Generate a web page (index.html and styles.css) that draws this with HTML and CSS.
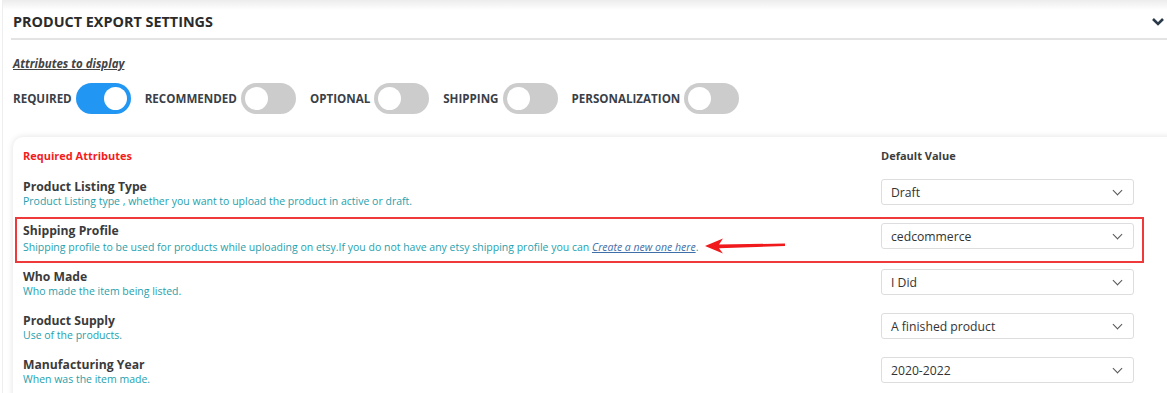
FILE: index.html
```html
<!DOCTYPE html>
<html lang="en">
<head>
    <meta charset="UTF-8">
    <meta name="viewport" content="width=device-width, initial-scale=1.0">
    <title>Product Export Settings</title>
    <link rel="stylesheet" href="styles.css">
</head>
<body>

    <div id="panel">
        <div class="panel-head">
            <h2>PRODUCT EXPORT SETTINGS</h2>
            <svg class="chevron" width="14" height="10" viewBox="0 0 14 10"><path d="M2 2l5 5 5-5" fill="none" stroke="#2b3a4a" stroke-width="2.6"/></svg>
        </div>

        <div class="panel-body">
            <p class="attr-title">Attributes to display</p>

            <div class="toggles">
                <label class="toggle">REQUIRED <span class="switch on"><span class="knob"></span></span></label>
                <label class="toggle">RECOMMENDED <span class="switch"><span class="knob"></span></span></label>
                <label class="toggle">OPTIONAL <span class="switch"><span class="knob"></span></span></label>
                <label class="toggle">SHIPPING <span class="switch"><span class="knob"></span></span></label>
                <label class="toggle">PERSONALIZATION <span class="switch"><span class="knob"></span></span></label>
            </div>

            <div class="card">
                <div class="row head-row">
                    <div class="req">Required Attributes</div>
                    <div class="dv">Default Value</div>
                </div>

                <div class="row">
                    <div>
                        <div class="name">Product Listing Type</div>
                        <div class="desc">Product Listing type , whether you want to upload the product in active or draft.</div>
                    </div>
                    <div class="select">Draft <span class="caret"></span></div>
                </div>

                <div class="row marked">
                    <div>
                        <div class="name">Shipping Profile</div>
                        <div class="desc">Shipping profile to be used for products while uploading on etsy.If you do not have any etsy shipping profile you can <a href="#">Create a new one here</a>.
                            <svg class="arrow" width="82" height="16" viewBox="0 0 82 16"><path d="M0 8L18 0.5 14 6.4 80 5.6 80 8 14 10.2 18 15.5Z" fill="#f0191b"/></svg>
                        </div>
                    </div>
                    <div class="select">cedcommerce <span class="caret"></span></div>
                </div>

                <div class="row">
                    <div>
                        <div class="name">Who Made</div>
                        <div class="desc">Who made the item being listed.</div>
                    </div>
                    <div class="select">I Did <span class="caret"></span></div>
                </div>

                <div class="row">
                    <div>
                        <div class="name">Product Supply</div>
                        <div class="desc">Use of the products.</div>
                    </div>
                    <div class="select">A finished product <span class="caret"></span></div>
                </div>

                <div class="row">
                    <div>
                        <div class="name">Manufacturing Year</div>
                        <div class="desc">When was the item made.</div>
                    </div>
                    <div class="select">2020-2022 <span class="caret"></span></div>
                </div>
            </div>
        </div>
    </div>

</body>
</html>
```

FILE: styles.css
```css
body {
    margin: 0;
    font-family: "Open Sans", "DejaVu Sans", sans-serif;
    background-color: #fff;
    overflow: hidden;
}
#panel {
    background: linear-gradient(#ececec, #fff 10px);
    padding-left: 8px;
    border-left: 1px solid #eee;
    margin-left: 2px;
}
.panel-head {
    display: flex;
    align-items: center;
    justify-content: space-between;
    height: 38px;
    border-bottom: 2px solid #e3e3e3;
    padding: 0 2px;
}
.panel-head h2 {
    margin: 4px 0 0;
    font-size: 14.4px;
    font-weight: 700;
    color: #2b2b2b;
}
.chevron {
    margin-top: 6px;
}
.panel-body {
    padding: 0 0 0 2px;
}
.attr-title {
    margin: 16px 0 0;
    font-size: 11.5px;
    font-weight: 700;
    font-style: italic;
    text-decoration: underline;
    color: #444;
}
.toggles {
    display: flex;
    align-items: center;
    gap: 14px;
    margin-top: 12px;
}
.toggle {
    display: flex;
    align-items: center;
    gap: 4px;
    font-size: 11.6px;
    font-weight: 700;
    color: #3a3f48;
}
.switch {
    display: inline-block;
    width: 55px;
    height: 31px;
    border-radius: 16px;
    background-color: #ccc;
    position: relative;
}
.knob {
    position: absolute;
    left: 4px;
    top: 4px;
    width: 23px;
    height: 23px;
    border-radius: 50%;
    background-color: #fff;
}
.switch.on {
    background-color: #2196f3;
}
.switch.on .knob {
    left: 28px;
}
.card {
    margin: 23px -40px 0 0;
    background-color: #fff;
    border-radius: 10px 0 0 0;
    box-shadow: 0 0 6px rgba(0, 0, 0, 0.12);
    padding: 0 0 8px 2px;
}
.row {
    display: grid;
    grid-template-columns: 1fr 253px;
    width: 1111px;
    padding: 4px 8px 7px 6px;
    border: 2px solid transparent;
}
.head-row {
    padding-top: 9px;
    padding-bottom: 8px;
    font-size: 11px;
    line-height: 15px;
    font-weight: 700;
}
.req {
    color: #f41c1c;
}
.dv {
    color: #3d3d3d;
}
.marked {
    border-color: #ee3a3a;
}
.name {
    font-size: 12.2px;
    font-weight: 700;
    color: #3b3b3b;
    line-height: 15px;
}
.desc {
    font-size: 10.5px;
    color: #1f9fad;
    line-height: 14px;
    white-space: nowrap;
}
.desc a {
    color: #3f6fa8;
    font-style: italic;
}
.arrow {
    vertical-align: -3px;
    margin-left: 4px;
}
.select {
    height: 26px;
    margin-top: 0;
    box-sizing: border-box;
    border: 1px solid #ddd;
    border-radius: 3px;
    padding: 0 9px;
    display: flex;
    align-items: center;
    justify-content: space-between;
    font-size: 12.2px;
    color: #333;
}
.caret {
    width: 6px;
    height: 6px;
    border-right: 1.6px solid #555;
    border-bottom: 1.6px solid #555;
    transform: rotate(45deg);
    margin: -4px 3px 0 0;
}
```
